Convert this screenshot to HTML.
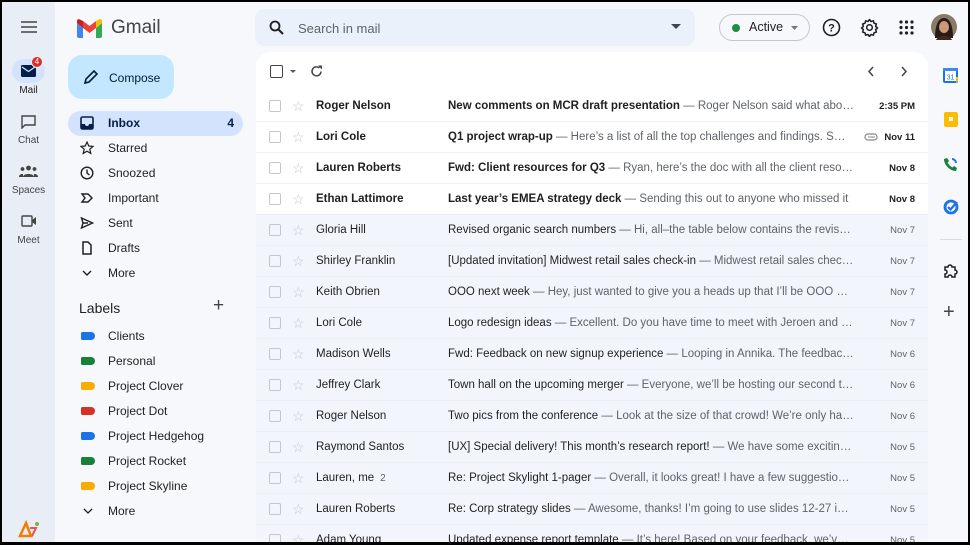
<!DOCTYPE html>
<html><head><meta charset="utf-8"><style>
*{box-sizing:border-box;margin:0;padding:0}
body{width:970px;height:545px;background:#000;overflow:hidden;font-family:"Liberation Sans",Arial,sans-serif;color:#1f1f1f}
#app{position:absolute;left:2px;top:2px;width:966px;height:540px;background:#f6f8fc;overflow:hidden}
.rail{position:absolute;left:0;top:0;width:53px;height:540px;background:#e9eef6}
.abs{position:absolute}
.ri{position:absolute;left:0;width:53px;text-align:center;font-size:10px;color:#444}
.nav{position:absolute;left:66px;width:175px;height:25px;border-radius:13px;font-size:12px;line-height:25px;padding-left:40px;color:#1f1f1f}
.nav svg{position:absolute;left:12px;top:5px}
.lab{position:absolute;left:106px;font-size:12px;color:#1f1f1f}
.tag{position:absolute;left:79px;width:14px;height:8px;border-radius:2px 5px 5px 2px}
.main{position:absolute;left:254px;top:50px;width:672px;height:500px;background:#fff;border-radius:14px 14px 0 0;overflow:hidden}
.row{position:absolute;left:0;width:672px;height:31px;border-bottom:1px solid #eceff3;font-size:11.5px;line-height:31px}
.row.r{background:#f2f6fc}
.cb{position:absolute;left:13px;top:9px;width:12px;height:12px;border:1.5px solid #c4c7c5;border-radius:2px}
.st{position:absolute;left:36px;top:7px;font-size:14px;color:#c4c7c5;line-height:16px}
.snd{position:absolute;left:60px;width:125px;white-space:nowrap;overflow:hidden}
.sub{position:absolute;left:192px;width:406px;white-space:nowrap;overflow:hidden;text-overflow:ellipsis;color:#5f6368}
.sub b{color:#1f1f1f;font-weight:normal}
.u .snd,.u .sub b{font-weight:bold;color:#1f1f1f}
.dt{position:absolute;right:13px;font-size:9.5px;color:#5f6368}
.u .dt{font-weight:bold;color:#1f1f1f}
</style></head><body><div id="app">
<div class="rail"></div>
<svg class="abs" style="left:19px;top:19px" width="16" height="12"><path d="M0 1h16M0 6h16M0 11h16" stroke="#444" stroke-width="1.6"/></svg>
<div class="abs" style="left:10px;top:57px;width:33px;height:24px;border-radius:12px;background:#d3e3fd"></div>
<svg class="abs" style="left:19px;top:63px" width="15" height="12"><rect width="15" height="12" rx="1.5" fill="#041e49"/><path d="M1 2l6.5 4.5L14 2" stroke="#d3e3fd" stroke-width="1.3" fill="none"/></svg>
<div class="abs" style="left:29px;top:54px;width:12px;height:12px;border-radius:6px;background:#d93025;border:1.5px solid #e9eef6;color:#fff;font-size:8px;line-height:9px;text-align:center">4</div>
<div class="ri" style="top:83px;color:#1f1f1f">Mail</div>
<svg class="abs" style="left:19px;top:113px" width="15" height="14"><path d="M1 1h13v9H4l-3 3z" stroke="#444" stroke-width="1.4" fill="none"/></svg>
<div class="ri" style="top:133px">Chat</div>
<svg class="abs" style="left:17px;top:163px" width="19" height="13" fill="#444"><circle cx="9.5" cy="3" r="2.4"/><circle cx="3.5" cy="4" r="1.9"/><circle cx="15.5" cy="4" r="1.9"/><path d="M4 12c0-4 11-4 11 0z M0 12c0-3 3-3 4-3v3z M19 12c0-3-3-3-4-3v3z"/></svg>
<div class="ri" style="top:183px">Spaces</div>
<svg class="abs" style="left:19px;top:213px" width="16" height="12"><rect x="1" y="1" width="10" height="10" rx="1" stroke="#444" stroke-width="1.4" fill="none"/><path d="M11 5l4-3v8l-4-3z" fill="#444"/></svg>
<div class="ri" style="top:233px">Meet</div>
<svg class="abs" style="left:16px;top:518px" width="22" height="18"><path d="M2 16L8 3l5 13z" fill="none" stroke="#f57c00" stroke-width="2.5"/><path d="M12 8l6 0-4 8" stroke="#ef5350" stroke-width="2" fill="none"/><circle cx="19" cy="4" r="2" fill="#7cb342"/></svg>

<svg class="abs" style="left:75px;top:17px" width="25" height="19" viewBox="0 0 25 19"><path d="M0 4v13a2 2 0 002 2h4V9z" fill="#4285f4"/><path d="M19 19h4a2 2 0 002-2V4l-6 5z" fill="#34a853"/><path d="M19 2v7l6-5V2c0-2-2-2.6-3-1.5z" fill="#fbbc04"/><path d="M6 9V2l6.5 5L19 2v7l-6.5 5z" fill="#ea4335"/><path d="M0 2v2l6 5V2L3 .5C2 -.3 0 .3 0 2z" fill="#c5221f"/></svg>
<div class="abs" style="left:109px;top:15px;font-size:19px;color:#444">Gmail</div>

<div class="abs" style="left:66px;top:53px;width:106px;height:44px;border-radius:14px;background:#c2e7ff"></div>
<svg class="abs" style="left:81px;top:68px" width="15" height="15"><path d="M2 13l1-4 8-8 3 3-8 8z" fill="none" stroke="#001d35" stroke-width="1.6"/></svg>
<div class="abs" style="left:107px;top:69px;font-size:12px;color:#001d35">Compose</div>

<div class="nav" style="top:109px;background:#d3e3fd;font-weight:bold;color:#041e49">Inbox<span style="position:absolute;right:9px">4</span><svg width="14" height="14"><rect x="1" y="1" width="12" height="12" rx="1.5" stroke="#041e49" stroke-width="1.6" fill="none"/><path d="M1 8h4a2 2 0 004 0h4v5H1z" fill="#041e49"/></svg></div>
<div class="nav" style="top:134px">Starred<svg width="14" height="14"><path d="M7 1l1.8 4 4.2.4-3.2 2.8 1 4.2L7 10.2 3.2 12.4l1-4.2L1 5.4 5.2 5z" fill="none" stroke="#1f1f1f" stroke-width="1.2"/></svg></div>
<div class="nav" style="top:159px">Snoozed<svg width="14" height="14"><circle cx="7" cy="7" r="5.8" fill="none" stroke="#1f1f1f" stroke-width="1.4"/><path d="M7 3.5V7l2.5 2" stroke="#1f1f1f" stroke-width="1.4" fill="none"/></svg></div>
<div class="nav" style="top:184px">Important<svg width="14" height="14"><path d="M2 3h6l4 4-4 4H2l3-4z" fill="none" stroke="#1f1f1f" stroke-width="1.4"/></svg></div>
<div class="nav" style="top:209px">Sent<svg width="14" height="14"><path d="M1.5 2l11 5-11 5 1.5-5z M3 7h5" fill="none" stroke="#1f1f1f" stroke-width="1.4"/></svg></div>
<div class="nav" style="top:234px">Drafts<svg width="14" height="14"><path d="M3 1h5l3 3v9H3z" fill="none" stroke="#1f1f1f" stroke-width="1.5"/></svg></div>
<div class="nav" style="top:259px">More<svg width="14" height="14"><path d="M3 5l4 4 4-4" fill="none" stroke="#1f1f1f" stroke-width="1.4"/></svg></div>

<div class="abs" style="left:77px;top:298px;font-size:14px;color:#1f1f1f">Labels</div>
<div class="abs" style="left:211px;top:294px;font-size:19px;color:#444;line-height:20px">+</div>
<div class="tag" style="top:330px;background:#1a73e8"></div><div class="lab" style="top:327px">Clients</div>
<div class="tag" style="top:355px;background:#188038"></div><div class="lab" style="top:352px">Personal</div>
<div class="tag" style="top:380px;background:#f9ab00"></div><div class="lab" style="top:377px">Project Clover</div>
<div class="tag" style="top:405px;background:#d93025"></div><div class="lab" style="top:402px">Project Dot</div>
<div class="tag" style="top:430px;background:#1a73e8"></div><div class="lab" style="top:427px">Project Hedgehog</div>
<div class="tag" style="top:455px;background:#188038"></div><div class="lab" style="top:452px">Project Rocket</div>
<div class="tag" style="top:480px;background:#f9ab00"></div><div class="lab" style="top:477px">Project Skyline</div>
<svg class="abs" style="left:80px;top:505px" width="12" height="10"><path d="M2 2l4 4 4-4" fill="none" stroke="#1f1f1f" stroke-width="1.3"/></svg>
<div class="lab" style="top:502px">More</div>

<div class="abs" style="left:253px;top:7px;width:440px;height:37px;border-radius:10px;background:#eaf1fb"></div>
<svg class="abs" style="left:267px;top:18px" width="15" height="15"><circle cx="6" cy="6" r="4.5" stroke="#1f1f1f" stroke-width="1.8" fill="none"/><path d="M9.5 9.5l4.5 4.5" stroke="#1f1f1f" stroke-width="2"/></svg>
<div class="abs" style="left:296px;top:19px;font-size:13px;color:#5f6368">Search in mail</div>
<svg class="abs" style="left:669px;top:22px" width="10" height="6"><path d="M0 0h10L5 5z" fill="#444"/></svg>

<div class="abs" style="left:717px;top:12px;width:91px;height:27px;border-radius:14px;border:1px solid #c4c7c5"></div>
<div class="abs" style="left:730px;top:22px;width:8px;height:8px;border-radius:4px;background:#1e8e3e"></div>
<div class="abs" style="left:747px;top:18px;font-size:12.5px;color:#1f1f1f">Active</div>
<svg class="abs" style="left:789px;top:24px" width="7" height="4"><path d="M0 0h7L3.5 4z" fill="#777"/></svg>
<svg class="abs" style="left:820px;top:16px" width="19" height="19"><circle cx="9.5" cy="9.5" r="8" stroke="#1f1f1f" stroke-width="1.6" fill="none"/><text x="9.5" y="13.5" font-size="11" text-anchor="middle" font-family="Liberation Sans" font-weight="bold" fill="#1f1f1f">?</text></svg>
<svg class="abs" style="left:858px;top:16px" width="19" height="19" viewBox="0 0 19 19"><path d="M9.5 1.5l1.5 2 2.4-.7.6 2.4 2.4.8-.8 2.4 1.9 1.6-1.9 1.6.8 2.4-2.4.8-.6 2.4-2.4-.7-1.5 2-1.5-2-2.4.7-.6-2.4-2.4-.8.8-2.4-1.9-1.6 1.9-1.6-.8-2.4 2.4-.8.6-2.4 2.4.7z" stroke="#1f1f1f" stroke-width="1.5" fill="none" stroke-linejoin="round"/><circle cx="9.5" cy="9.5" r="2.8" stroke="#1f1f1f" stroke-width="1.5" fill="none"/></svg>
<svg class="abs" style="left:897px;top:18px" width="15" height="15" fill="#1f1f1f"><circle cx="2" cy="2" r="1.6"/><circle cx="7.5" cy="2" r="1.6"/><circle cx="13" cy="2" r="1.6"/><circle cx="2" cy="7.5" r="1.6"/><circle cx="7.5" cy="7.5" r="1.6"/><circle cx="13" cy="7.5" r="1.6"/><circle cx="2" cy="13" r="1.6"/><circle cx="7.5" cy="13" r="1.6"/><circle cx="13" cy="13" r="1.6"/></svg>
<svg class="abs" style="left:929px;top:12px" width="26" height="26"><circle cx="13" cy="13" r="13" fill="#8a7a6a"/><path d="M4 24c0-12 3-20 9-20s9 8 9 20z" fill="#2a1c14"/><ellipse cx="13" cy="13" rx="5" ry="6" fill="#c99a7a"/><path d="M5 26c2-5 14-5 16 0z" fill="#3b2a20"/></svg>

<svg class="abs" style="left:941px;top:66px" width="15" height="15"><rect width="15" height="15" rx="2" fill="#1a73e8"/><rect x="2" y="3" width="11" height="10" fill="#fff"/><text x="7.5" y="11.5" font-size="7" text-anchor="middle" fill="#1a73e8" font-family="Liberation Sans">31</text><rect x="0" y="0" width="15" height="3" fill="#4285f4"/><path d="M13 15V9l2 0v4z" fill="#fbbc04"/></svg>
<svg class="abs" style="left:942px;top:110px" width="14" height="15"><rect width="14" height="15" rx="2" fill="#fbbc04"/><rect x="5" y="5" width="4" height="4" fill="#fff"/></svg>
<svg class="abs" style="left:942px;top:155px" width="14" height="14"><path d="M3 1l2 3-1.5 1.5c1 2 3 4 5 5L10 9l3 2-1 3C6 14 0 8 0 2z" fill="#188038"/><path d="M8 1a5 5 0 015 5h-2a3 3 0 00-3-3z" fill="#1a73e8"/></svg>
<svg class="abs" style="left:941px;top:197px" width="16" height="16"><circle cx="8" cy="8" r="6" stroke="#1a73e8" stroke-width="2.8" fill="none"/><path d="M5 8l2.5 2.5L14 3" stroke="#1a73e8" stroke-width="2.2" fill="none"/></svg>
<div class="abs" style="left:938px;top:237px;width:22px;height:1px;background:#dadce0"></div>
<svg class="abs" style="left:941px;top:261px" width="15" height="15"><path d="M2 4h3a2 2 0 014 0h3v3a2 2 0 010 4v3H9a2 2 0 00-4 0H2v-3a2 2 0 000-4z" stroke="#1f1f1f" stroke-width="1.5" fill="none"/></svg>
<div class="abs" style="left:941px;top:300px;font-size:20px;color:#444;line-height:20px">+</div>

<div class="main">
<div class="cb" style="top:13px;left:14px;width:13px;height:13px;border-color:#444"></div>
<svg class="abs" style="left:34px;top:18px" width="6" height="4"><path d="M0 0h6L3 3z" fill="#555"/></svg>
<svg class="abs" style="left:54px;top:13px" width="13" height="13"><path d="M11 6.5A4.5 4.5 0 1 1 9.5 3" stroke="#444" stroke-width="1.5" fill="none"/><path d="M8 0.5h4v4z" fill="#444"/></svg>
<svg class="abs" style="left:611px;top:14px" width="8" height="11"><path d="M6 1L2 5.5 6 10" stroke="#444" stroke-width="1.5" fill="none"/></svg>
<svg class="abs" style="left:644px;top:14px" width="8" height="11"><path d="M2 1l4 4.5L2 10" stroke="#444" stroke-width="1.5" fill="none"/></svg>

<div class="row u" style="top:39px"><div class="cb"></div><div class="st">☆</div><div class="snd">Roger Nelson</div><div class="sub"><b>New comments on MCR draft presentation</b> — Roger Nelson said what about the proposal</div><div class="dt">2:35 PM</div></div>
<div class="row u" style="top:70px"><div class="cb"></div><div class="st">☆</div><div class="snd">Lori Cole</div><div class="sub" style="width:398px"><b>Q1 project wrap-up</b> — Here’s a list of all the top challenges and findings. Surprisingly</div><svg class="abs" style="left:608px;top:11px" width="14" height="8"><rect x="1" y="1" width="12" height="6" rx="3" stroke="#888" stroke-width="1.2" fill="none"/><path d="M4 4h7" stroke="#888"/></svg><div class="dt">Nov 11</div></div>
<div class="row u" style="top:101px"><div class="cb"></div><div class="st">☆</div><div class="snd">Lauren Roberts</div><div class="sub"><b>Fwd: Client resources for Q3</b> — Ryan, here’s the doc with all the client resources</div><div class="dt">Nov 8</div></div>
<div class="row u" style="top:132px"><div class="cb"></div><div class="st">☆</div><div class="snd">Ethan Lattimore</div><div class="sub"><b>Last year’s EMEA strategy deck</b> — Sending this out to anyone who missed it</div><div class="dt">Nov 8</div></div>
<div class="row r" style="top:163px"><div class="cb"></div><div class="st">☆</div><div class="snd">Gloria Hill</div><div class="sub"><b>Revised organic search numbers</b> — Hi, all–the table below contains the revised numbers</div><div class="dt">Nov 7</div></div>
<div class="row r" style="top:194px"><div class="cb"></div><div class="st">☆</div><div class="snd">Shirley Franklin</div><div class="sub"><b>[Updated invitation] Midwest retail sales check-in</b> — Midwest retail sales check-in</div><div class="dt">Nov 7</div></div>
<div class="row r" style="top:225px"><div class="cb"></div><div class="st">☆</div><div class="snd">Keith Obrien</div><div class="sub"><b>OOO next week</b> — Hey, just wanted to give you a heads up that I’ll be OOO next week</div><div class="dt">Nov 7</div></div>
<div class="row r" style="top:256px"><div class="cb"></div><div class="st">☆</div><div class="snd">Lori Cole</div><div class="sub"><b>Logo redesign ideas</b> — Excellent. Do you have time to meet with Jeroen and me</div><div class="dt">Nov 7</div></div>
<div class="row r" style="top:287px"><div class="cb"></div><div class="st">☆</div><div class="snd">Madison Wells</div><div class="sub"><b>Fwd: Feedback on new signup experience</b> — Looping in Annika. The feedback we</div><div class="dt">Nov 6</div></div>
<div class="row r" style="top:318px"><div class="cb"></div><div class="st">☆</div><div class="snd">Jeffrey Clark</div><div class="sub"><b>Town hall on the upcoming merger</b> — Everyone, we’ll be hosting our second town hall</div><div class="dt">Nov 6</div></div>
<div class="row r" style="top:349px"><div class="cb"></div><div class="st">☆</div><div class="snd">Roger Nelson</div><div class="sub"><b>Two pics from the conference</b> — Look at the size of that crowd! We’re only halfway</div><div class="dt">Nov 6</div></div>
<div class="row r" style="top:380px"><div class="cb"></div><div class="st">☆</div><div class="snd">Raymond Santos</div><div class="sub"><b>[UX] Special delivery! This month’s research report!</b> — We have some exciting stuff</div><div class="dt">Nov 5</div></div>
<div class="row r" style="top:411px"><div class="cb"></div><div class="st">☆</div><div class="snd">Lauren, me <span style="font-size:10px;color:#5f6368">&nbsp;2</span></div><div class="sub"><b>Re: Project Skylight 1-pager</b> — Overall, it looks great! I have a few suggestions for</div><div class="dt">Nov 5</div></div>
<div class="row r" style="top:442px"><div class="cb"></div><div class="st">☆</div><div class="snd">Lauren Roberts</div><div class="sub"><b>Re: Corp strategy slides</b> — Awesome, thanks! I’m going to use slides 12-27 in my deck</div><div class="dt">Nov 5</div></div>
<div class="row r" style="top:473px"><div class="cb"></div><div class="st">☆</div><div class="snd">Adam Young</div><div class="sub"><b>Updated expense report template</b> — It’s here! Based on your feedback, we’ve made</div><div class="dt">Nov 5</div></div>
</div>
</div></body></html>
